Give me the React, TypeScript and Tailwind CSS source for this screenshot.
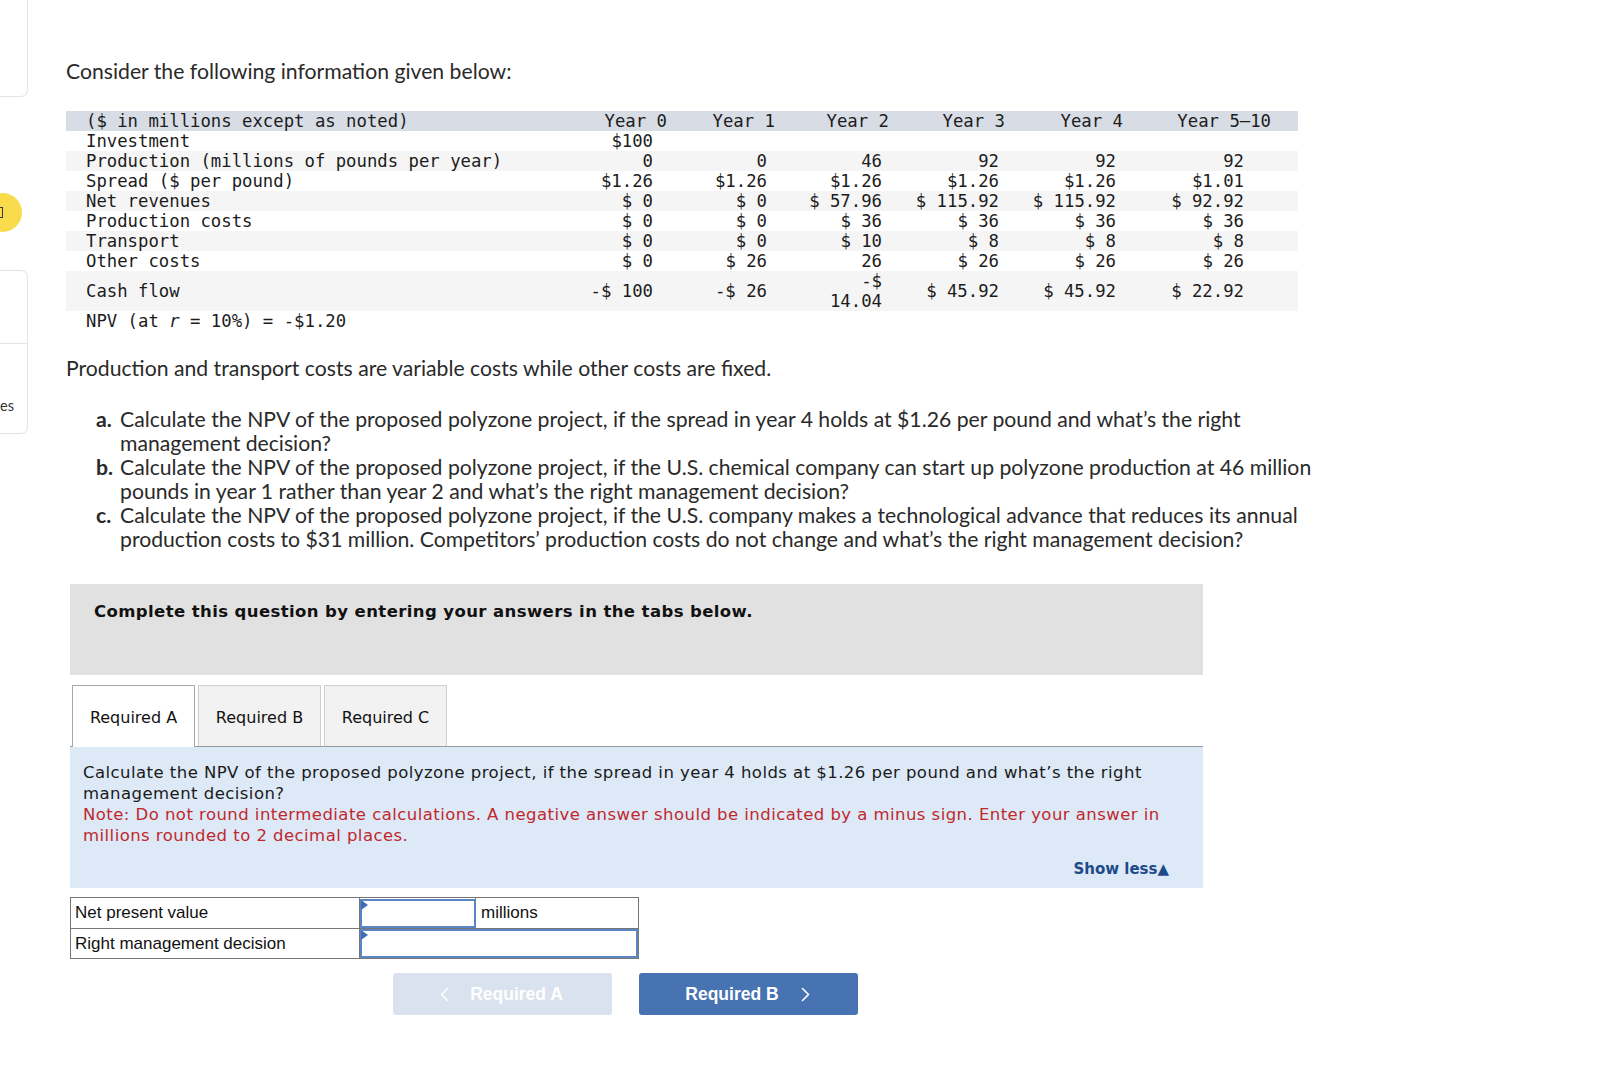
import React from "react";

const valPr = ["pr-[14px]", "pr-[8px]", "pr-[7px]", "pr-[6px]", "pr-[7px]", "pr-[27px]"];

const rows: { label: string; vals: React.ReactNode[]; bg: string; tall?: boolean }[] = [
  { label: "Investment", vals: ["$100", "", "", "", "", ""], bg: "bg-white" },
  { label: "Production (millions of pounds per year)", vals: ["0", "0", "46", "92", "92", "92"], bg: "bg-[#f5f5f5]" },
  { label: "Spread ($ per pound)", vals: ["$1.26", "$1.26", "$1.26", "$1.26", "$1.26", "$1.01"], bg: "bg-white" },
  { label: "Net revenues", vals: ["$ 0", "$ 0", "$ 57.96", "$ 115.92", "$ 115.92", "$ 92.92"], bg: "bg-[#f5f5f5]" },
  { label: "Production costs", vals: ["$ 0", "$ 0", "$ 36", "$ 36", "$ 36", "$ 36"], bg: "bg-white" },
  { label: "Transport", vals: ["$ 0", "$ 0", "$ 10", "$ 8", "$ 8", "$ 8"], bg: "bg-[#f5f5f5]" },
  { label: "Other costs", vals: ["$ 0", "$ 26", "26", "$ 26", "$ 26", "$ 26"], bg: "bg-white" },
  {
    label: "Cash flow",
    vals: [
      "-$ 100",
      "-$ 26",
      (
        <span key="cf">
          -$
          <br />
          14.04
        </span>
      ),
      "$ 45.92",
      "$ 45.92",
      "$ 22.92",
    ],
    bg: "bg-[#f5f5f5]",
    tall: true,
  },
];

const grid = "grid grid-cols-[491px_110px_108px_114px_116px_118px_148px] w-[1232px]";

function Sidebar() {
  return (
    <div className="w-[28px] shrink-0 flex flex-col overflow-hidden">
      <div className="h-[97px] w-[40px] -ml-[12px] border-r border-b border-[#e4e4e4] rounded-br-[7px]" />
      <div className="mt-[96px] h-[39px] w-[39px] -ml-[17px] rounded-full bg-[#f9dc4b] flex items-center justify-end pr-[19px]">
        <div className="h-[11px] w-[4px] border-t-[1.5px] border-r-[1.5px] border-b-[1.5px] border-[#3a3a3a]" />
      </div>
      <div className="mt-[38px] h-[164px] w-[40px] -ml-[12px] border-t border-r border-b border-[#e4e4e4] rounded-r-[7px] flex flex-col">
        <div className="h-[73px] border-b border-[#e4e4e4]" />
        <div className="flex-1 pt-[52px] pl-[12px] text-[14.5px] leading-[20px] text-[#333] font-['Lato',sans-serif]">
          es
        </div>
      </div>
    </div>
  );
}

function DataTable() {
  return (
    <div className="mt-[28px] w-[1232px] font-['DejaVu_Sans_Mono',monospace] text-[17.3px] leading-[20px] text-[#1c1c1c] whitespace-pre">
      <div className={`${grid} h-[20px] bg-[#d8dce5]`}>
        <div className="pl-[20px]">($ in millions except as noted)</div>
        {["Year 0", "Year 1", "Year 2", "Year 3", "Year 4", "Year 5–10"].map((h) => (
          <div key={h} className="text-right">
            {h}
          </div>
        ))}
      </div>
      {rows.map((r) => (
        <div key={r.label} className={`${grid} ${r.tall ? "h-[40px]" : "h-[20px]"} ${r.bg} items-center`}>
          <div className="pl-[20px]">{r.label}</div>
          {r.vals.map((v, i) => (
            <div key={i} className={`text-right ${valPr[i]}`}>
              {v}
            </div>
          ))}
        </div>
      ))}
      <div className="h-[20px] pl-[20px]">
        NPV (at <span className="italic">r</span> = 10%) = -$1.20
      </div>
    </div>
  );
}

function Questions() {
  const items: { k: string; lines: string[] }[] = [
    {
      k: "a.",
      lines: [
        "Calculate the NPV of the proposed polyzone project, if the spread in year 4 holds at $1.26 per pound and what’s the right",
        "management decision?",
      ],
    },
    {
      k: "b.",
      lines: [
        "Calculate the NPV of the proposed polyzone project, if the U.S. chemical company can start up polyzone production at 46 million",
        "pounds in year 1 rather than year 2 and what’s the right management decision?",
      ],
    },
    {
      k: "c.",
      lines: [
        "Calculate the NPV of the proposed polyzone project, if the U.S. company makes a technological advance that reduces its annual",
        "production costs to $31 million. Competitors’ production costs do not change and what’s the right management decision?",
      ],
    },
  ];
  return (
    <div className="mt-[27px] pl-[30px] flex flex-col">
      {items.map((it) => (
        <div key={it.k} className="flex">
          <span className="w-[24px] shrink-0 font-bold">{it.k}</span>
          <div className="flex flex-col">
            {it.lines.map((l) => (
              <span key={l} className="whitespace-nowrap">
                {l}
              </span>
            ))}
          </div>
        </div>
      ))}
    </div>
  );
}

function Tabs() {
  return (
    <div className="mt-[10px] ml-[4px] w-[1133px] h-[62px] flex items-end gap-[3px] pl-[2px] border-b border-[#9a9a9a] font-['DejaVu_Sans',sans-serif] text-[16px] text-[#111]">
      <div className="h-[62px] w-[123px] flex items-center justify-center bg-white border border-b-0 border-[#a8a8a8] -mb-px pt-[3px]">
        Required A
      </div>
      <div className="h-[61px] w-[123px] flex items-center justify-center bg-[#f2f2f2] border border-b-0 border-[#cfcfcf] pt-[3px]">
        Required B
      </div>
      <div className="h-[61px] w-[123px] flex items-center justify-center bg-[#f2f2f2] border border-b-0 border-[#cfcfcf] pt-[3px]">
        Required C
      </div>
    </div>
  );
}

function InputBox({ w }: { w: string }) {
  return (
    <div className={`relative h-[29px] ${w} border-2 border-[#5b86c4] bg-white`}>
      <div className="absolute -top-[1px] -left-[1px] w-0 h-0 border-y-[5px] border-y-transparent border-l-[7px] border-l-[#3e6db4]" />
    </div>
  );
}

function Chevron({ dir }: { dir: "left" | "right" }) {
  return (
    <svg width="9" height="15" viewBox="0 0 9 15" fill="none" stroke="currentColor" strokeWidth="1.6" strokeLinecap="round" strokeLinejoin="round">
      {dir === "left" ? <path d="M7.5 1.5 L1.5 7.5 L7.5 13.5" /> : <path d="M1.5 1.5 L7.5 7.5 L1.5 13.5" />}
    </svg>
  );
}

export default function App() {
  return (
    <div className="flex w-[1618px] min-h-[1084px] bg-white text-[#2a2a2a] overflow-hidden">
      <Sidebar />
      <main className="ml-[38px] pt-[59px] w-[1400px] flex flex-col font-['Lato',sans-serif] text-[21.2px] leading-[24px]">
        <p>Consider the following information given below:</p>
        <DataTable />
        <p className="mt-[25px]">Production and transport costs are variable costs while other costs are fixed.</p>
        <Questions />

        <div className="mt-[33px] ml-[4px] w-[1133px] h-[91px] bg-[#e1e1e1] pt-[18px] pl-[24px] font-['DejaVu_Sans',sans-serif] font-bold text-[16.5px] tracking-[0.4px] leading-[20px] text-[#111]">
          Complete this question by entering your answers in the tabs below.
        </div>

        <Tabs />

        <div className="ml-[4px] w-[1133px] h-[141px] bg-[#dde9f6] pt-[15px] pl-[13px] pr-[34px] font-['DejaVu_Sans',sans-serif] text-[16.5px] tracking-[0.45px] leading-[21px] text-[#1a1a1a]">
          <div className="whitespace-nowrap">
            Calculate the NPV of the proposed polyzone project, if the spread in year 4 holds at $1.26 per pound and what’s the right
          </div>
          <div>management decision?</div>
          <div className="text-[#c0282d] whitespace-nowrap">
            Note: Do not round intermediate calculations. A negative answer should be indicated by a minus sign. Enter your answer in
          </div>
          <div className="text-[#c0282d]">millions rounded to 2 decimal places.</div>
          <div className="mt-[13px] flex justify-end">
            <span className="font-bold text-[15px] tracking-normal text-[#1d4a8a]">Show less▲</span>
          </div>
        </div>

        <div className="mt-[9px] ml-[4px] w-[569px] border border-[#777] font-['Liberation_Sans',sans-serif] text-[17px] text-[#111]">
          <div className="flex h-[31px] border-b border-[#777]">
            <div className="w-[289px] border-r border-[#777] pl-[4px] flex items-center">Net present value</div>
            <div className="flex items-center">
              <InputBox w="w-[116px]" />
              <div className="h-[31px] border-l border-[#777] -ml-px pl-[5px] flex items-center">millions</div>
            </div>
          </div>
          <div className="flex h-[29px]">
            <div className="w-[289px] border-r border-[#777] pl-[4px] flex items-center">Right management decision</div>
            <div className="flex items-center flex-1">
              <InputBox w="flex-1" />
            </div>
          </div>
        </div>

        <div className="mt-[14px] ml-[4px] pl-[323px] flex gap-[27px] font-['Liberation_Sans',sans-serif] font-bold text-[17.5px] text-white">
          <div className="w-[219px] h-[42px] rounded-[3px] bg-[#d9e2ee] flex items-center justify-center gap-[21px] pr-[2px]">
            <Chevron dir="left" />
            <span>Required A</span>
          </div>
          <div className="w-[219px] h-[42px] rounded-[3px] bg-[#4773b2] flex items-center justify-center gap-[22px] pr-[2px]">
            <span>Required B</span>
            <Chevron dir="right" />
          </div>
        </div>
      </main>
    </div>
  );
}
